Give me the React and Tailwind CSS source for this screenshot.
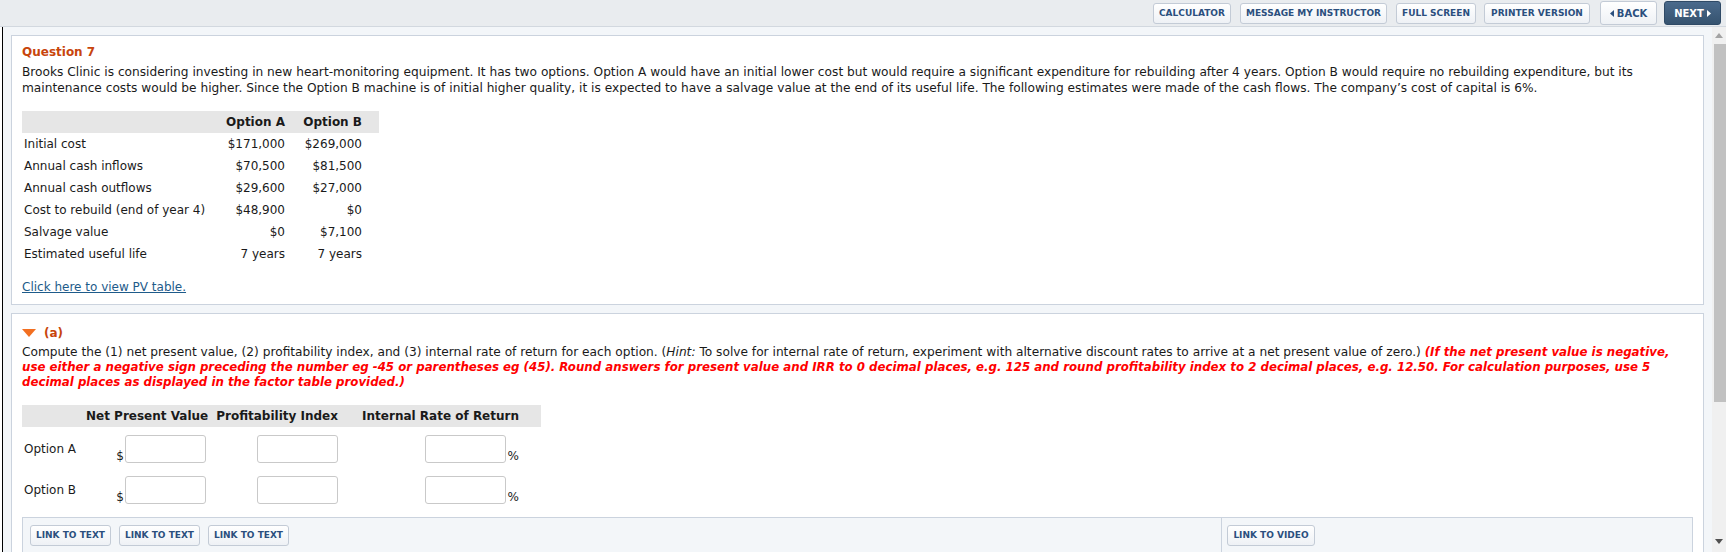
import React from "react";

const rows = [
  ["Initial cost", "$171,000", "$269,000"],
  ["Annual cash inflows", "$70,500", "$81,500"],
  ["Annual cash outflows", "$29,600", "$27,000"],
  ["Cost to rebuild (end of year 4)", "$48,900", "$0"],
  ["Salvage value", "$0", "$7,100"],
  ["Estimated useful life", "7 years", "7 years"],
];

function ToolButton({ children, className = "" }) {
  return (
    <button className={`h-[21px] rounded-[3px] border border-[#c3cbd6] bg-gradient-to-b from-white to-[#eef1f5] text-[9px] font-bold text-[#2b4f7e] leading-none whitespace-nowrap ${className}`}>
      {children}
    </button>
  );
}

function AnswerBox() {
  return <div className="w-[81px] h-[28px] rounded-[3px] border border-[#c9c9c9] bg-white" />;
}

export default function App() {
  return (
    <div className="w-[1726px] h-[552px] overflow-hidden bg-white text-[12px] text-[#1a1a1a] font-['DejaVu_Sans',sans-serif]">
      {/* top toolbar */}
      <div className="h-[27px] bg-[#e9ecef] border-b border-[#d2d8df] flex items-center justify-end pr-[5px]">
        <ToolButton className="w-[78px]">CALCULATOR</ToolButton>
        <ToolButton className="w-[147px] ml-[9px]">MESSAGE MY INSTRUCTOR</ToolButton>
        <ToolButton className="w-[80px] ml-[9px]">FULL SCREEN</ToolButton>
        <ToolButton className="w-[106px] ml-[8px]">PRINTER VERSION</ToolButton>
        <button className="ml-[10px] h-[24px] w-[57px] rounded-[3px] border border-[#c3cbd6] bg-gradient-to-b from-white to-[#eef1f5] text-[10px] font-bold text-[#2b4f7e] flex items-center justify-center gap-[3px]">
          <svg width="4" height="7" viewBox="0 0 4 7"><path d="M4 0 L0 3.5 L4 7 Z" fill="#2b4f7e" /></svg>
          BACK
        </button>
        <button className="ml-[7px] h-[24px] w-[57px] rounded-[3px] border border-[#2f4a66] bg-gradient-to-b from-[#4a6a8c] to-[#36536f] text-[10px] font-bold text-white flex items-center justify-center gap-[3px]">
          NEXT
          <svg width="4" height="7" viewBox="0 0 4 7"><path d="M0 0 L4 3.5 L0 7 Z" fill="#fff" /></svg>
        </button>
      </div>

      <div className="flex h-[525px]">
        {/* left frame edge */}
        <div className="w-[2px] bg-white" />
        <div className="w-[1px] bg-black" />

        <div className="flex-1 bg-[#f3f6f9] pl-[8px] pr-[8px] pt-[8px] flex flex-col gap-[8px] overflow-hidden">
          {/* question panel */}
          <section className="bg-white border border-[#cbd3de] px-[10px] pt-[8px] pb-[9px]">
            <h2 className="text-[12px] font-bold text-[#c8450c] leading-[16px]">Question 7</h2>
            <p className="leading-[16px] mt-[4px] text-[12.2px]">
              Brooks Clinic is considering investing in new heart-monitoring equipment. It has two options. Option A would have an initial lower cost but would require a significant expenditure for rebuilding after 4 years. Option B would require no rebuilding expenditure, but its maintenance costs would be higher. Since the Option B machine is of initial higher quality, it is expected to have a salvage value at the end of its useful life. The following estimates were made of the cash flows. The company’s cost of capital is 6%.
            </p>

            <div className="mt-[15px] w-[357px] grid grid-cols-[185px_80px_77px_15px]">
              <div className="col-span-4 grid grid-cols-subgrid bg-[#e6e6e6] h-[22px] items-center font-bold">
                <div />
                <div className="text-right pr-[2px]">Option A</div>
                <div className="text-right pr-[2px]">Option B</div>
                <div />
              </div>
              {rows.map((r) => (
                <div key={r[0]} className="col-span-4 grid grid-cols-subgrid h-[22px] items-center">
                  <div className="pl-[2px] whitespace-nowrap">{r[0]}</div>
                  <div className="text-right pr-[2px]">{r[1]}</div>
                  <div className="text-right pr-[2px]">{r[2]}</div>
                  <div />
                </div>
              ))}
            </div>

            <a href="#" className="block mt-[14px] text-[#1e5b8a] underline leading-[16px]">
              Click here to view PV table.
            </a>
          </section>

          {/* part (a) panel */}
          <section className="bg-white border border-[#cbd3de] px-[10px] pt-[11px] flex-1">
            <div className="flex items-center gap-[8px] h-[16px]">
              <svg width="14" height="8" viewBox="0 0 14 8"><path d="M0 0 H14 L7 8 Z" fill="#f26f21" /></svg>
              <span className="text-[12px] font-bold text-[#c8450c]">(a)</span>
            </div>
            <p className="mt-[4px] leading-[15px] text-[12.2px]">
              Compute the (1) net present value, (2) profitability index, and (3) internal rate of return for each option. (<i>Hint:</i> To solve for internal rate of return, experiment with alternative discount rates to arrive at a net present value of zero.){" "}
              <b className="italic text-[#ff0000] text-[11.8px]">
                (If the net present value is negative, use either a negative sign preceding the number eg -45 or parentheses eg (45). Round answers for present value and IRR to 0 decimal places, e.g. 125 and round profitability index to 2 decimal places, e.g. 12.50. For calculation purposes, use 5 decimal places as displayed in the factor table provided.)
              </b>
            </p>

            <div className="mt-[15px] w-[519px] grid grid-cols-[64px_122px_132px_181px_20px]">
              <div className="col-span-5 grid grid-cols-subgrid bg-[#e6e6e6] h-[22px] items-center font-bold whitespace-nowrap">
                <div />
                <div className="text-right pr-[2px]">Net Present Value</div>
                <div className="text-right pr-[2px]">Profitability Index</div>
                <div className="text-right pr-[2px]">Internal Rate of Return</div>
                <div />
              </div>
              {["Option A", "Option B"].map((o) => (
                <div key={o} className="col-span-5 grid grid-cols-subgrid h-[41px] pt-[8px] items-start">
                  <div className="pl-[2px] h-[28px] flex items-center">{o}</div>
                  <div className="h-[28px] flex justify-end items-end pr-[2px]">
                    <span className="leading-none mb-[1px] mr-[1px]">$</span>
                    <AnswerBox />
                  </div>
                  <div className="h-[28px] flex justify-end pr-[2px]">
                    <AnswerBox />
                  </div>
                  <div className="h-[28px] flex justify-end items-end pr-[2px]">
                    <AnswerBox />
                    <span className="leading-none mb-[1px] ml-[2px]">%</span>
                  </div>
                  <div />
                </div>
              ))}
            </div>

            {/* links footer */}
            <div className="mt-[8px] h-[40px] border border-[#cbd3de] bg-[#f3f6f9] flex">
              <div className="w-[1199px] border-r border-[#cbd3de] flex items-start gap-[8px] pl-[7px] pt-[7px]">
                {["LINK TO TEXT", "LINK TO TEXT", "LINK TO TEXT"].map((l, i) => (
                  <ToolButton key={i} className="w-[81px]">{l}</ToolButton>
                ))}
              </div>
              <div className="flex-1 pl-[5px] pt-[7px]">
                <ToolButton className="w-[88px]">LINK TO VIDEO</ToolButton>
              </div>
            </div>
          </section>
        </div>

        {/* scrollbar */}
        <div className="w-[14px] bg-[#f0f0f0] flex flex-col items-center">
          <svg className="mt-[6px]" width="8" height="5" viewBox="0 0 8 5"><path d="M0 5 L4 0 L8 5 Z" fill="#a3a3a3" /></svg>
          <div className="mt-[6px] w-[12px] ml-[2px] h-[358px] bg-[#c1c1c1]" />
          <div className="flex-1" />
          <svg className="mb-[8px]" width="8" height="5" viewBox="0 0 8 5"><path d="M0 0 L4 5 L8 0 Z" fill="#505050" /></svg>
        </div>
      </div>
    </div>
  );
}
